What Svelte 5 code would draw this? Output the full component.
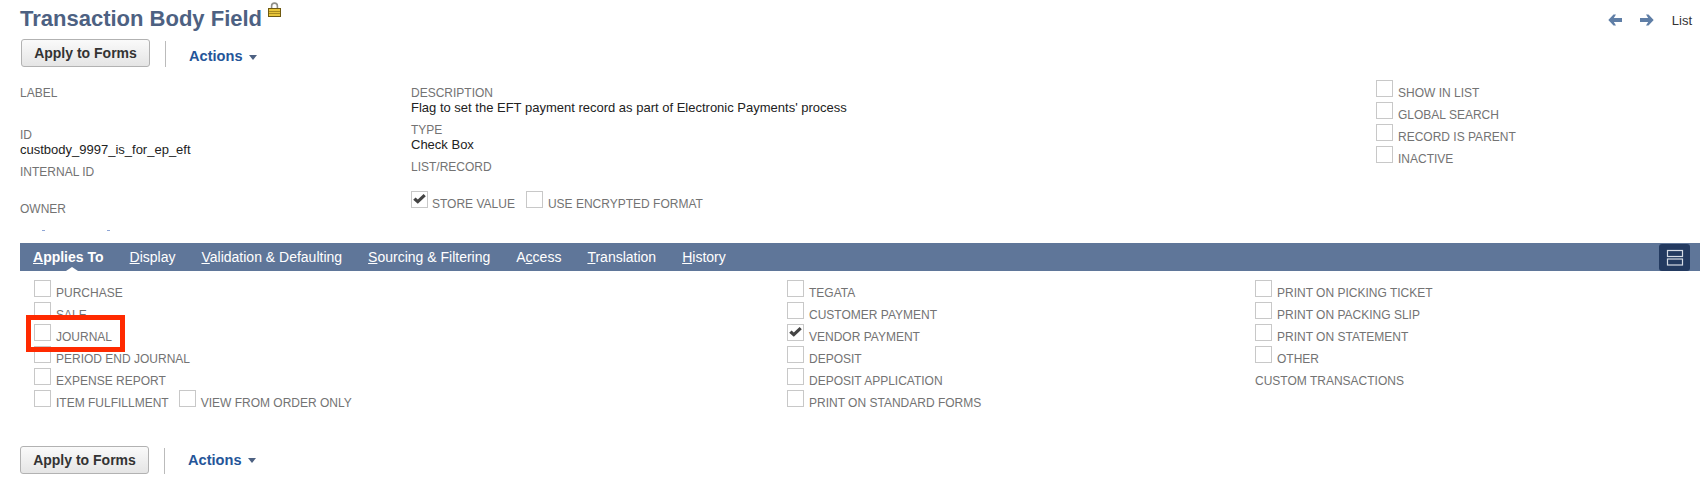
<script>
  const col1 = [
    { label: 'PURCHASE' },
    { label: 'SALE' },
    { label: 'JOURNAL' },
    { label: 'PERIOD END JOURNAL' },
    { label: 'EXPENSE REPORT' },
  ];
  const col2 = [
    { label: 'TEGATA' },
    { label: 'CUSTOMER PAYMENT' },
    { label: 'VENDOR PAYMENT', checked: true },
    { label: 'DEPOSIT' },
    { label: 'DEPOSIT APPLICATION' },
    { label: 'PRINT ON STANDARD FORMS' },
  ];
  const col3 = [
    { label: 'PRINT ON PICKING TICKET' },
    { label: 'PRINT ON PACKING SLIP' },
    { label: 'PRINT ON STATEMENT' },
    { label: 'OTHER' },
  ];
  const flags = ['SHOW IN LIST', 'GLOBAL SEARCH', 'RECORD IS PARENT', 'INACTIVE'];
  const tabs = [
    ['', 'A', 'pplies To'],
    ['', 'D', 'isplay'],
    ['', 'V', 'alidation & Defaulting'],
    ['', 'S', 'ourcing & Filtering'],
    ['A', 'c', 'cess'],
    ['', 'T', 'ranslation'],
    ['', 'H', 'istory'],
  ];
</script>

{#snippet box(checked)}
  <span class="box">
    {#if checked}
      <svg width="15" height="15" viewBox="0 0 15 15"><path d="M1.2 7.8 L3.6 5.4 L5.8 7.6 L11.6 2 L13.8 4.2 L5.8 11.8 Z" fill="#444" /></svg>
    {/if}
  </span>
{/snippet}

{#snippet check(label, checked)}
  <div class="check">
    {@render box(checked)}
    <span class="lab">{label}</span>
  </div>
{/snippet}

{#snippet toolbar(kind)}
  <div class="toolbar {kind}">
    <button class="btn">Apply to Forms</button>
    <span class="sep"></span>
    <span class="actions">Actions<span class="caret"></span></span>
  </div>
{/snippet}

<div class="page">
  <header class="head">
    <div class="title-wrap">
      <h1>Transaction Body Field</h1>
      <svg class="lock" width="13" height="15" viewBox="0 0 13 15">
        <path d="M3.6 7V4a2.9 2.9 0 0 1 5.8 0V7" fill="none" stroke="#8f8f88" stroke-width="1.6" />
        <rect x="0.5" y="6.5" width="12" height="8" fill="#e8c53a" stroke="#6f5a10" stroke-width="1" />
        <path d="M1 9.5h11M1 11.5h11" stroke="#a88a1e" stroke-width="1" />
      </svg>
    </div>
    <nav class="pager">
      <svg width="14" height="12" viewBox="0 0 14 12"><path d="M5.5 .5 L8 .5 L5.8 4 H14 V8 H5.8 L8 11.5 H5.5 L0.3 6 Z" fill="#5f7ea6" /></svg>
      <svg width="14" height="12" viewBox="0 0 14 12"><path d="M8.5 .5 L6 .5 L8.2 4 H0 V8 H8.2 L6 11.5 H8.5 L13.7 6 Z" fill="#5f7ea6" /></svg>
      <span>List</span>
    </nav>
  </header>

  <div class="top-bar">{@render toolbar('upper')}</div>

  <section class="meta">
    <div class="col-a">
      <div class="lbl">LABEL</div>
      <div class="blank"></div>
      <div class="field">
        <div class="lbl">ID</div>
        <div class="val">custbody_9997_is_for_ep_eft</div>
      </div>
      <div class="field"><div class="lbl">INTERNAL ID</div><div class="val">&nbsp;</div></div>
      <div class="field"><div class="lbl">OWNER</div></div>
      <div class="owner-link"><i></i><i></i></div>
    </div>
    <div class="col-b">
      <div class="field">
        <div class="lbl">DESCRIPTION</div>
        <div class="val">Flag to set the EFT payment record as part of Electronic Payments' process</div>
      </div>
      <div class="field">
        <div class="lbl">TYPE</div>
        <div class="val">Check Box</div>
      </div>
      <div class="field"><div class="lbl">LIST/RECORD</div><div class="val short">&nbsp;</div></div>
      <div class="inline tight">
        {@render check('STORE VALUE', true)}
        {@render check('USE ENCRYPTED FORMAT', false)}
      </div>
    </div>
    <div class="col-c">
      {#each flags as f}
        {@render check(f, false)}
      {/each}
    </div>
  </section>

  <div class="tabbar">
    {#each tabs as t, i}
      <span class="tab" class:active={i === 0}>{t[0]}<u>{t[1]}</u>{t[2]}</span>
    {/each}
    <span class="toggle">
      <svg width="18" height="18" viewBox="0 0 18 18">
        <rect x="1.5" y="1.5" width="15" height="6" fill="none" stroke="#d5dbe5" stroke-width="1.2" />
        <rect x="1.5" y="10" width="15" height="6" fill="none" stroke="#d5dbe5" stroke-width="1.2" />
      </svg>
    </span>
  </div>

  <section class="applies">
    <div class="c1">
      {#each col1 as c}
        {@render check(c.label, c.checked)}
      {/each}
      <div class="inline">
        {@render check('ITEM FULFILLMENT', false)}
        {@render check('VIEW FROM ORDER ONLY', false)}
      </div>
      <div class="mark"></div>
    </div>
    <div class="c2">
      {#each col2 as c}
        {@render check(c.label, c.checked)}
      {/each}
    </div>
    <div class="c3">
      {#each col3 as c}
        {@render check(c.label, c.checked)}
      {/each}
      <div class="plain">CUSTOM TRANSACTIONS</div>
    </div>
  </section>

  <div class="bottom-bar">{@render toolbar('lower')}</div>
</div>

<style>
  :global(body) {
    margin: 0;
    background: #fff;
  }
  .page {
    width: 1708px;
    height: 485px;
    overflow: hidden;
    font-family: "Liberation Sans", Arial, sans-serif;
    color: #222;
  }
  .head {
    display: flex;
    justify-content: space-between;
    height: 39px;
    padding: 0 16px 0 20px;
  }
  .title-wrap {
    display: flex;
    align-items: flex-start;
  }
  h1 {
    margin: 6px 0 0;
    font-size: 22px;
    line-height: 26px;
    font-weight: 700;
    color: #4d6182;
  }
  .lock {
    margin: 2px 0 0 6px;
  }
  .pager {
    display: flex;
    align-items: center;
    gap: 18px;
    height: 40px;
    font-size: 13px;
    color: #333;
  }
  .top-bar {
    height: 41px;
    padding-left: 21px;
  }
  .toolbar {
    display: flex;
    align-items: center;
    height: 28px;
  }
  .btn {
    width: 129px;
    height: 28px;
    padding: 0;
    border: 1px solid #b2b2b2;
    border-radius: 3px;
    background: linear-gradient(#fafafa, #e5e5e5);
    font: 700 14px "Liberation Sans", Arial, sans-serif;
    color: #333;
  }
  .sep {
    width: 1px;
    height: 26px;
    margin: 2px 23px 0 15px;
    background: #bbb;
  }
  .actions {
    display: flex;
    align-items: center;
    font-size: 14.6px;
    font-weight: 700;
    color: #255599;
  }
  .upper .actions {
    margin-top: 6px;
  }
  .lower .actions {
    margin-top: -1px;
  }
  .caret {
    width: 0;
    height: 0;
    margin: 2px 0 0 6px;
    border-left: 4px solid transparent;
    border-right: 4px solid transparent;
    border-top: 5px solid #4d6182;
  }
  .meta {
    display: grid;
    grid-template-columns: 391px 965px 1fr;
    height: 151px;
    margin-bottom: 12px;
    padding-left: 20px;
    overflow: hidden;
  }
  .col-a,
  .col-b {
    padding-top: 5px;
  }
  .lbl {
    padding-top: 1px;
    font-size: 12px;
    line-height: 14px;
    color: #737373;
  }
  .val {
    font-size: 13px;
    line-height: 15px;
    color: #222;
  }
  .blank {
    height: 27px;
  }
  .field {
    margin-bottom: 7px;
  }
  .val.short {
    line-height: 10px;
  }
  .owner-link {
    display: flex;
    gap: 62px;
    margin: 14px 0 0 22px;
  }
  .owner-link i {
    width: 3px;
    height: 2px;
    background: #8fa6d6;
  }
  .check {
    display: flex;
    align-items: flex-start;
    height: 22px;
  }
  .box {
    box-sizing: border-box;
    display: flex;
    align-items: center;
    justify-content: center;
    flex: none;
    width: 17px;
    height: 17px;
    border: 1px solid #c8c8c8;
    background: #fff;
  }
  .lab,
  .plain {
    padding-left: 5px;
    padding-top: 6px;
    font-size: 12px;
    line-height: 14px;
    color: #737373;
    white-space: nowrap;
  }
  .plain {
    padding-left: 0;
  }
  .inline {
    display: flex;
    gap: 10px;
  }
  .inline.tight {
    gap: 11px;
  }
  .inline.tight .check:first-child .lab {
    padding-left: 4px;
  }
  .tabbar {
    display: flex;
    align-items: center;
    gap: 26px;
    box-sizing: border-box;
    width: 1680px;
    height: 28px;
    margin-left: 20px;
    padding-left: 13px;
    background: #5f7699;
    color: #fff;
    font-size: 14px;
  }
  .tab {
    position: relative;
    line-height: 28px;
    white-space: nowrap;
  }
  .tab.active {
    font-weight: 700;
  }
  .tab.active::after {
    content: "";
    position: absolute;
    left: 50%;
    bottom: 0;
    margin-left: -2px;
    border-left: 6px solid transparent;
    border-right: 6px solid transparent;
    border-bottom: 4px solid #fff;
  }
  .toggle {
    display: flex;
    align-items: center;
    justify-content: center;
    align-self: flex-end;
    width: 31px;
    height: 27px;
    margin-left: auto;
    margin-right: 10px;
    border-radius: 3px;
    background: #233a60;
  }
  .applies {
    display: grid;
    grid-template-columns: 753px 468px 1fr;
    height: 175px;
    padding: 9px 0 0 34px;
    box-sizing: border-box;
  }
  .c1 {
    position: relative;
  }
  .mark {
    position: absolute;
    left: -8px;
    top: 35px;
    width: 89px;
    height: 27px;
    border: 5px solid #ff2a00;
  }
  .bottom-bar {
    padding-left: 20px;
  }
</style>
